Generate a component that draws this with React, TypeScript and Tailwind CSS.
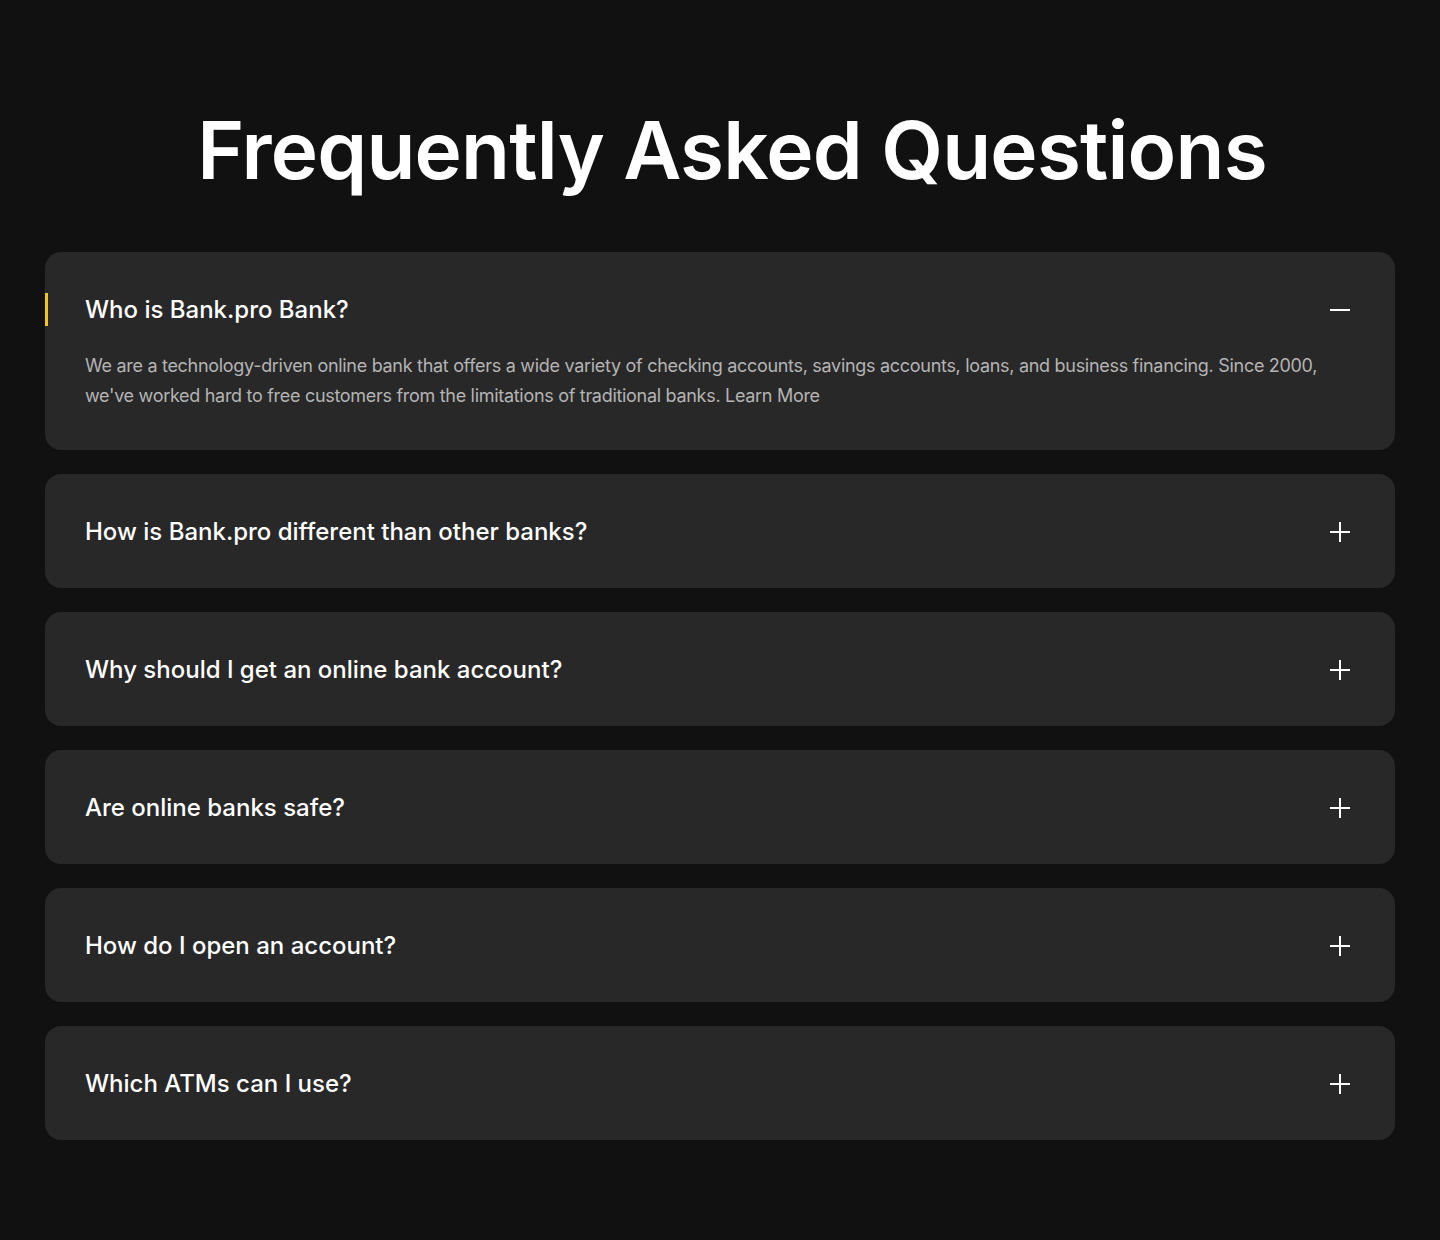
import React, { useState } from "react";

const faqs = [
  {
    q: "Who is Bank.pro Bank?",
    a: "We are a technology-driven online bank that offers a wide variety of checking accounts, savings accounts, loans, and business financing. Since 2000, we've worked hard to free customers from the limitations of traditional banks. Learn More",
  },
  { q: "How is Bank.pro different than other banks?", a: "" },
  { q: "Why should I get an online bank account?", a: "" },
  { q: "Are online banks safe?", a: "" },
  { q: "How do I open an account?", a: "" },
  { q: "Which ATMs can I use?", a: "" },
];

const ToggleIcon = ({ open }: { open: boolean }) => (
  <svg width="20" height="20" viewBox="0 0 20 20" fill="none" className="shrink-0">
    <path d="M0 10H20" stroke="white" strokeWidth="2" />
    {!open && <path d="M10 0V20" stroke="white" strokeWidth="2" />}
  </svg>
);

const FaqItem = (props: any) => {
  const open = props.open;
  return (
    <div className="relative rounded-2xl bg-[#282828] pt-[41px] pb-[39px] pl-10 pr-[45px]">
      {open && (
        <span className="absolute left-0 top-[41px] h-[33px] w-[3px] bg-[#f5c518]" />
      )}
      <button
        onClick={props.onToggle}
        className="flex w-full items-center justify-between text-left"
      >
        <span className="text-[24px] font-medium leading-[34px] text-white">
          {props.q}
        </span>
        <ToggleIcon open={open} />
      </button>
      {open && props.a ? (
        <p className="mt-6 pr-4 text-[18px] leading-[30px] tracking-[-0.3px] text-[#b4b4b4]">
          {props.a}
        </p>
      ) : null}
    </div>
  );
};

export default function App() {
  const [openIdx, setOpenIdx] = useState<number>(0);
  return (
    <div
      className="min-h-[1240px] bg-[#111111] px-[45px] pt-[100px] pb-24"
      style={{ fontFamily: "Inter, 'Noto Sans', sans-serif" }}
    >
      <h1 className="mb-[52px] pl-6 text-center text-[80px] font-semibold leading-[100px] tracking-[-0.8px] text-white">
        Frequently Asked Questions
      </h1>
      <div className="flex flex-col gap-6">
        {faqs.map((f, i) => (
          <FaqItem
            key={`faq-${i}`}
            q={f.q}
            a={f.a}
            open={openIdx === i}
            onToggle={() => setOpenIdx(openIdx === i ? -1 : i)}
          />
        ))}
      </div>
    </div>
  );
}
